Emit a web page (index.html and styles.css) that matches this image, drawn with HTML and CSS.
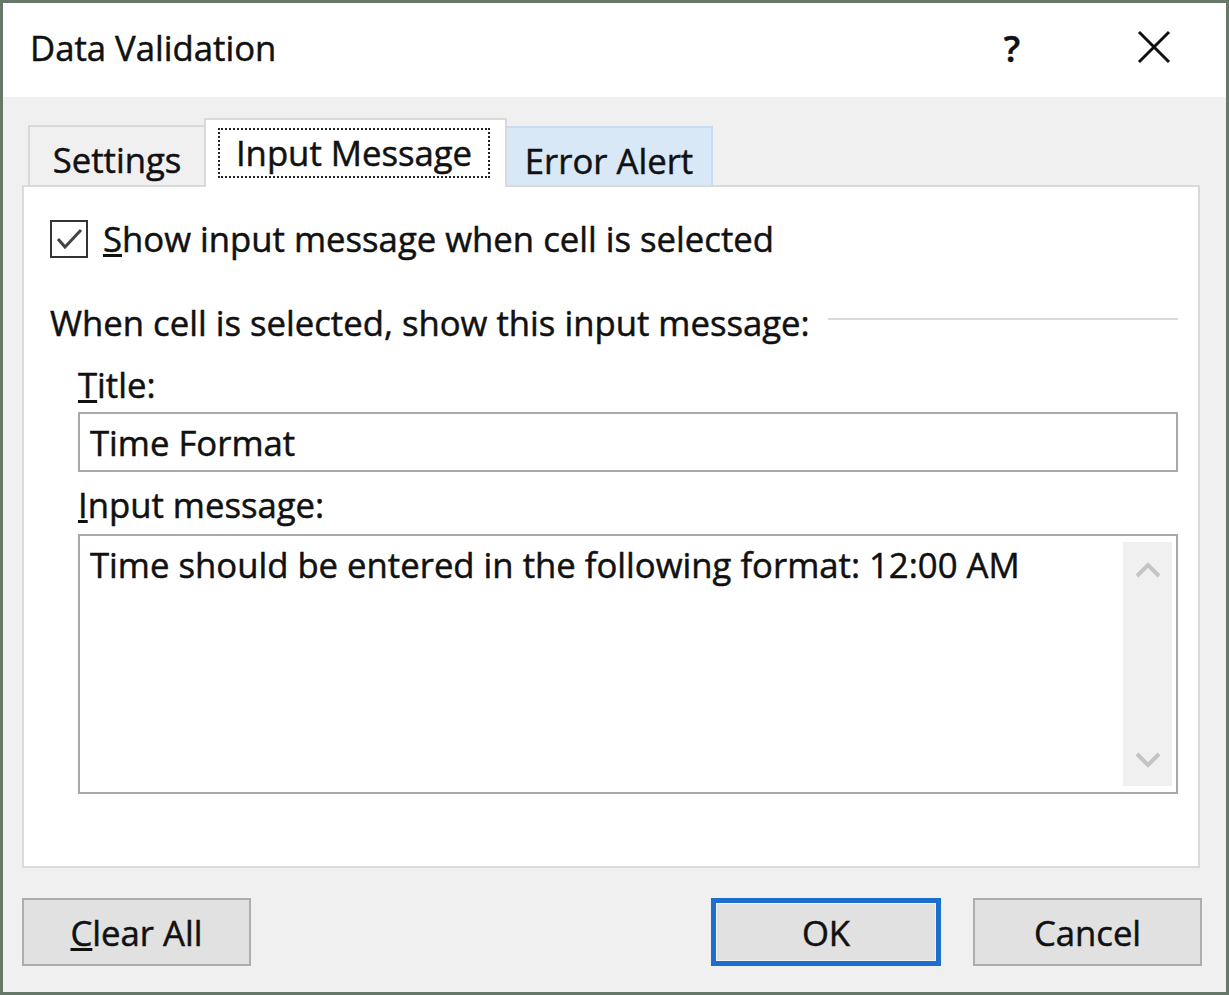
FILE: index.html
```html
<!DOCTYPE html>
<html lang="en">
<head>
  <meta charset="UTF-8">
  <meta name="viewport" content="width=device-width, initial-scale=1.0">
  <title>Data Validation</title>
  <link rel="stylesheet" href="styles.css">
</head>
<body>
  <div class="window">
    <div class="titlebar">
      <div class="title">Data Validation</div>
      <div class="caption-btn help">?</div>
      <div class="caption-btn close">
        <svg width="34" height="34" viewBox="0 0 34 34">
          <path d="M2 2 L32 32 M32 2 L2 32" stroke="#111" stroke-width="3" fill="none"/>
        </svg>
      </div>
    </div>

    <div class="body">
      <div class="tabs">
        <div class="tab tab-settings">Settings</div>
        <div class="tab tab-active"><span class="focus">Input Message</span></div>
        <div class="tab tab-error">Error Alert</div>
      </div>

      <div class="panel">
        <div class="check-row">
          <span class="checkbox">
            <svg width="34" height="34" viewBox="0 0 34 34">
              <path d="M6 17 L13 25 L29 8" stroke="#444" stroke-width="3" fill="none"/>
            </svg>
          </span>
          <span class="check-label"><u>S</u>how input message when cell is selected</span>
        </div>

        <div class="group-row">
          <span>When cell is selected, show this input message:</span>
          <span class="group-line"></span>
        </div>

        <div class="field">
          <div class="field-label"><u>T</u>itle:</div>
          <div class="textbox">Time Format</div>
          <div class="field-label label-msg"><u>I</u>nput message:</div>
          <div class="textarea">
            <div class="textarea-text">Time should be entered in the following format: 12:00 AM</div>
            <div class="scrollbar">
              <svg width="26" height="16" viewBox="0 0 26 16">
                <path d="M2 14 L13 3 L24 14" stroke="#c4c4c4" stroke-width="4" fill="none"/>
              </svg>
              <svg width="26" height="16" viewBox="0 0 26 16">
                <path d="M2 2 L13 13 L24 2" stroke="#c4c4c4" stroke-width="4" fill="none"/>
              </svg>
            </div>
          </div>
        </div>
      </div>

      <div class="buttons">
        <button class="btn"><u>C</u>lear All</button>
        <button class="btn btn-default">OK</button>
        <button class="btn btn-cancel">Cancel</button>
      </div>
    </div>
  </div>
</body>
</html>
```

FILE: styles.css
```css
body {
  margin: 0;
  padding: 0;
  font-family: "Open Sans", "Noto Sans", sans-serif;
  font-size: 34.7px;
  color: #111;
  -webkit-text-stroke: 0.5px #111;
}
.window {
  width: 1229px;
  height: 995px;
  box-sizing: border-box;
  border: 3px solid #687868;
  display: flex;
  flex-direction: column;
}
.titlebar {
  height: 94px;
  background-color: #fff;
  display: flex;
  align-items: center;
  padding: 0 22px 0 27px;
}
.title {
  flex: 1;
  line-height: 46px;
  margin-top: -4px;
}
.caption-btn {
  width: 100px;
  height: 94px;
  display: flex;
  align-items: center;
  justify-content: center;
}
.help {
  font-size: 36px;
  font-weight: 600;
  margin-right: 42px;
  margin-top: -4px;
}
.close {
  margin-top: -6px;
}
.body {
  flex: 1;
  background-color: #f0f0f0;
  padding: 21px 26px 0 19px;
  display: flex;
  flex-direction: column;
}
.tabs {
  display: flex;
  align-items: flex-end;
  padding-left: 6px;
  margin-bottom: -2px;
  position: relative;
  z-index: 1;
}
.tab {
  box-sizing: border-box;
  line-height: 46px;
  text-align: center;
  margin-bottom: 2px;
}
.tab-settings {
  width: 176px;
  height: 60px;
  padding-top: 10px;
  border-top: 2px solid #d9d9d9;
  border-left: 2px solid #d9d9d9;
}
.tab-active {
  width: 303px;
  height: 69px;
  margin-bottom: 0;
  background-color: #fff;
  border: 2px solid #d9d9d9;
  border-bottom: none;
  padding: 10px 15px 0 12px;
}
.focus {
  display: block;
  border: 2px dotted #222;
  padding: 0 4px;
  margin-top: -2px;
}
.tab-error {
  width: 206px;
  height: 59px;
  padding-top: 10px;
  background-color: #d9e8f7;
  border: 2px solid #c9dcef;
  border-left: none;
  border-bottom: none;
}
.panel {
  height: 683px;
  box-sizing: border-box;
  background-color: #fff;
  border: 2px solid #dadada;
  padding: 33px 20px 0 26px;
}
.check-row {
  display: flex;
  align-items: center;
  height: 38px;
}
.checkbox {
  width: 38px;
  height: 38px;
  box-sizing: border-box;
  border: 2px solid #333;
  display: flex;
  align-items: center;
  justify-content: center;
}
.check-label {
  margin-left: 15px;
  line-height: 46px;
}
.group-row {
  display: flex;
  align-items: center;
  height: 46px;
  margin-top: 41px;
}
.group-line {
  flex: 1;
  height: 2px;
  background-color: #dadada;
  margin: -6px 0 0 18px;
}
.field {
  margin-left: 28px;
}
.field-label {
  line-height: 46px;
  margin-top: 17px;
}
.label-msg {
  margin-top: 10px;
}
.textbox {
  box-sizing: border-box;
  height: 60px;
  margin-top: 4px;
  border: 2px solid #a9a9a9;
  padding: 0 10px;
  display: flex;
  align-items: center;
}
.textarea {
  box-sizing: border-box;
  height: 260px;
  margin-top: 6px;
  border: 2px solid #a9a9a9;
  display: flex;
}
.textarea-text {
  flex: 1;
  line-height: 46px;
  padding: 6px 10px;
}
.scrollbar {
  width: 49px;
  margin: 6px 4px 6px 0;
  background-color: #f0f0f0;
  display: flex;
  flex-direction: column;
  justify-content: space-between;
  align-items: center;
  padding: 20px 0 18px;
}
.buttons {
  display: flex;
  margin-top: 30px;
  margin-right: -2px;
}
.btn {
  width: 229px;
  height: 68px;
  box-sizing: border-box;
  font-family: inherit;
  font-size: 34.7px;
  color: #111;
  -webkit-text-stroke: 0.5px #111;
  background-color: #e1e1e1;
  border: 2px solid #adadad;
  padding: 0;
}
.btn-default {
  width: 230px;
  margin-left: auto;
  border: 5px solid #1c6fcc;
  box-shadow: inset 0 0 0 1px #f4f4f4;
}
.btn-cancel {
  margin-left: 32px;
}
```
